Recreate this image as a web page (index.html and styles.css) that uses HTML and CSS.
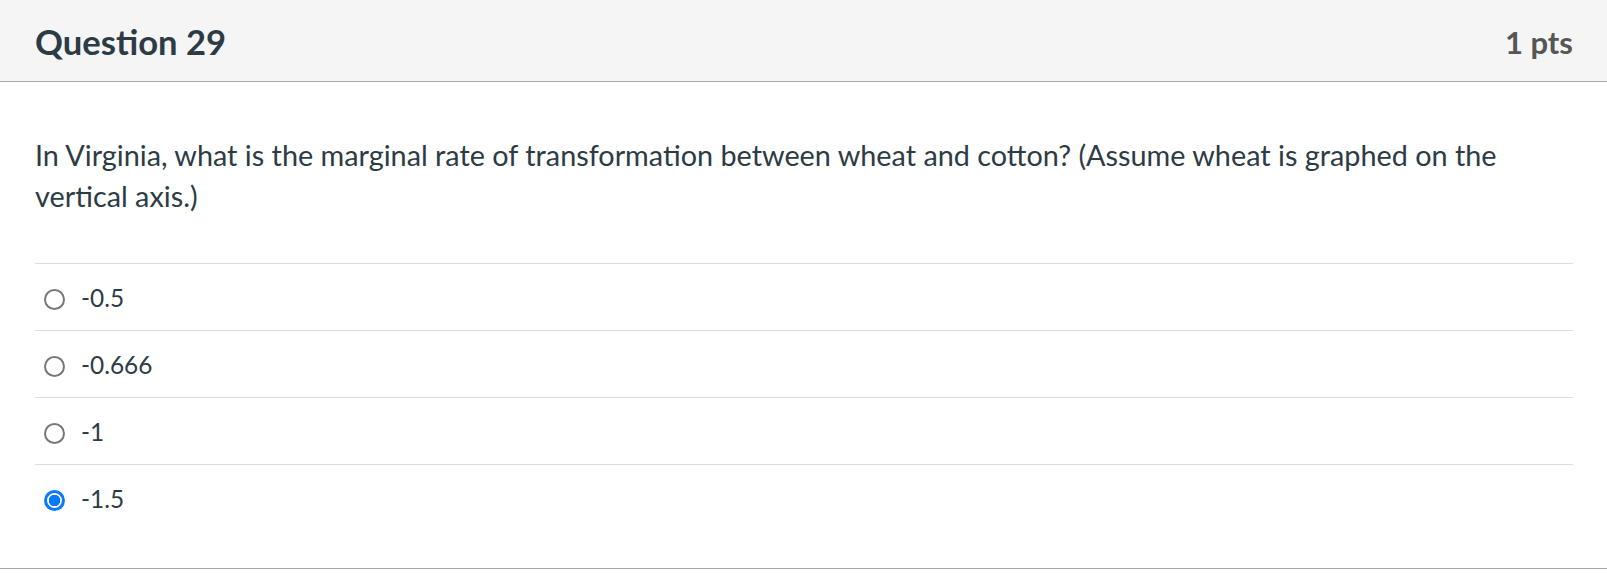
FILE: index.html
```html
<!DOCTYPE html>
<html>
<head>
<meta charset="utf-8">
<link rel="stylesheet" href="styles.css">
</head>
<body>
<div class="question">
  <div class="header">
    <h2 class="title">Question 29</h2>
    <div class="pts">1 pts</div>
  </div>
  <div class="content">
    <p class="text">In Virginia, what is the marginal rate of transformation between wheat and cotton? (Assume wheat is graphed on the vertical axis.)</p>
    <div class="answers">
      <label class="answer"><input class="radio" type="radio" name="q29"><span>-0.5</span></label>
      <label class="answer"><input class="radio" type="radio" name="q29"><span>-0.666</span></label>
      <label class="answer"><input class="radio" type="radio" name="q29"><span>-1</span></label>
      <label class="answer"><input class="radio" type="radio" name="q29" checked><span>-1.5</span></label>
    </div>
  </div>
</div>
</body>
</html>
```
FILE: styles.css
```css
html, body {
  margin: 0;
  padding: 0;
  background: #fff;
}
body {
  font-family: Lato, "Noto Sans", sans-serif;
  color: #2d3b45;
}
.question {
  border-bottom: 1px solid #a8a8a8;
}
.header {
  height: 81px;
  background: #f5f5f5;
  border-bottom: 1px solid #a8a8a8;
  padding: 0 34px 0 35px;
  display: flex;
  align-items: center;
  justify-content: space-between;
}
.title {
  margin: 2px 0 0 0;
  font-size: 34.6px;
  font-weight: 700;
  color: #2d3b45;
}
.pts {
  margin-top: 2px;
  font-size: 31px;
  font-weight: 700;
  color: #565656;
}
.content {
  padding: 53px 34px 37px 35px;
}
.text {
  margin: 0 0 46px 0;
  padding-right: 40px;
  font-size: 28.8px;
  line-height: 41px;
}
.answer {
  display: flex;
  align-items: center;
  height: 66px;
  border-top: 1px solid #dcdcdc;
  font-size: 24.4px;
  padding-left: 9px;
}
.radio {
  appearance: none;
  -webkit-appearance: none;
  box-sizing: border-box;
  width: 21px;
  height: 21px;
  margin: 4px 16px 0 0;
  border: 2px solid #767676;
  border-radius: 50%;
  background: #fff;
  flex: none;
}
.radio:checked {
  border: 3px solid #0a78ff;
  background: radial-gradient(circle, #0a78ff 0 5.5px, #fff 6px);
}
```
